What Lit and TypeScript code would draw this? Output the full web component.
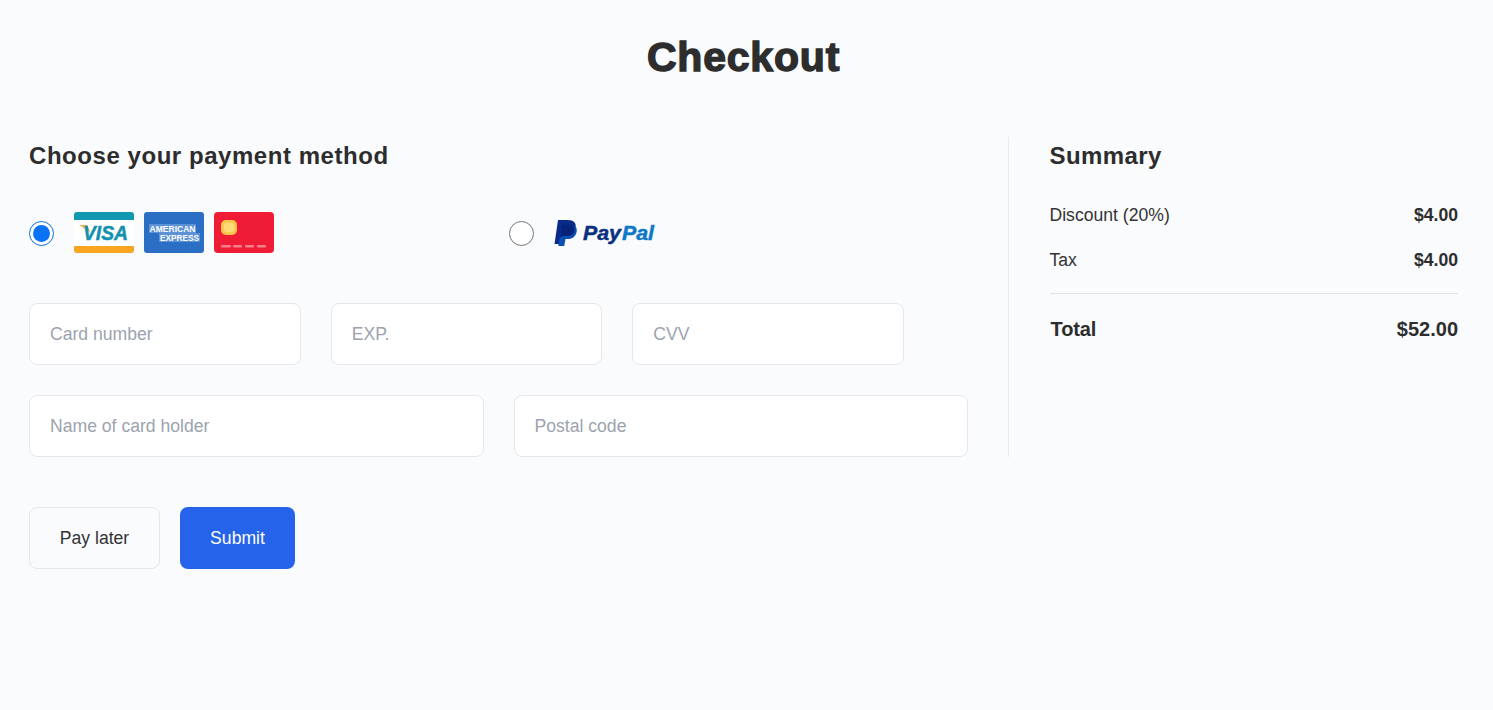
import { LitElement, html, css } from "lit";
import { customElement } from "lit/decorators.js";

@customElement("app-root")
export class AppRoot extends LitElement {
  static styles = css`
    :host { display: block; min-height: 710px; background: #fafbfd; font-family: "Liberation Sans", Arial, sans-serif; color: #2d2d2d; }
    .page { width: 1487px; box-sizing: border-box; padding: 34px 29px 0 29px; }
    h1 { margin: 0; text-align: center; font-size: 41px; line-height: 46px; font-weight: 700; letter-spacing: 0.8px; -webkit-text-stroke: 1.4px #2d2d2d; }
    .grid { display: grid; grid-template-columns: 980px 449px; margin-top: 57px; }
    .left { padding-right: 40px; border-right: 1px solid #e9ebee; height: 320px; box-sizing: border-box; }
    .right { padding-left: 40.5px; }
    h2 { margin: 1px 0 0; font-size: 24px; line-height: 36px; font-weight: 700; }
    .left h2 { letter-spacing: .55px; }
    .right h2 { letter-spacing: .4px; }
    .methods { display: grid; grid-template-columns: 480px 1fr; margin-top: 38px; height: 42px; }
    .method { display: flex; align-items: center; }
    .radio { width: 25px; height: 25px; box-sizing: border-box; border-radius: 50%; border: 1px solid #767676; background: #fff; flex: none; margin-right: 20px; display: flex; align-items: center; justify-content: center; }
    .radio.on { border: 1.5px solid #0b6fe0; }
    .radio.on i { width: 17px; height: 17px; border-radius: 50%; background: #0a73f5; }
    .cards { display: flex; gap: 10px; }
    svg { display: block; }
    .row { display: grid; gap: 30px; margin-top: 30px; }
    .row.three { grid-template-columns: repeat(3, 1fr); margin-top: 49px; width: 875px; }
    .row.two { grid-template-columns: repeat(2, 1fr); }
    .field { height: 62px; box-sizing: border-box; padding: 0 20px; display: flex; align-items: center; background: #fff; border: 1px solid #e5e7eb; border-radius: 8px; font-size: 17.6px; color: #9ca3af; }
    .actions { display: flex; gap: 20px; margin-top: 50px; }
    .btn { height: 62px; box-sizing: border-box; display: flex; align-items: center; justify-content: center; border-radius: 8px; font-size: 17.6px; }
    .btn.later { width: 131px; border: 1px solid #e5e7eb; color: #333; background: #fafbfd; }
    .btn.submit { width: 115px; background: #2563eb; color: #fff; }
    .line { display: flex; justify-content: space-between; font-size: 17.6px; line-height: 27px; color: #333; }
    .line b { color: #2d2d2d; }
    .line.first { margin-top: 28px; }
    .line.second { margin-top: 18px; }
    hr { border: 0; border-top: 1px solid #e2e4e8; margin: 19px 0 0; }
    .total { display: flex; justify-content: space-between; margin-top: 20px; font-size: 20px; line-height: 30px; font-weight: 700; }
    .total span:first-child { padding-left: 1px; letter-spacing: -.1px; }
  `;

  render() {
    return html`<div class="page">
      <h1>Checkout</h1>
      <div class="grid">
        <div class="left">
          <h2>Choose your payment method</h2>
          <div class="methods">
            <div class="method">
              <span class="radio on"><i></i></span>
              <div class="cards">
                <svg width="60" height="42" viewBox="0 0 60 42">
                  <rect width="60" height="41" rx="3" fill="#fff"/>
                  <path d="M0 8V3a3 3 0 0 1 3-3h54a3 3 0 0 1 3 3v5z" fill="#0f98b0"/>
                  <path d="M0 34v4a3 3 0 0 0 3 3h54a3 3 0 0 0 3-3v-4z" fill="#f9a51f"/>
                  <path d="M5 13h8l3 7z" fill="#f2b04a"/>
                  <text x="9" y="28" font-family="Liberation Sans" font-size="21" font-weight="700" font-style="italic" fill="#1390ae" stroke="#1390ae" stroke-width=".5" textLength="45" lengthAdjust="spacingAndGlyphs">VISA</text>
                </svg>
                <svg width="60" height="42" viewBox="0 0 60 42">
                  <rect width="60" height="41" rx="3" fill="#2b6fc4"/>
                  <rect x="5" y="12" width="47" height="9" fill="#5d93d6"/>
                  <rect x="15" y="21" width="41" height="9" fill="#5d93d6"/>
                  <g font-family="Liberation Sans" font-size="8.500" font-weight="700" fill="#fff">
                    <text x="5.500" y="20" textLength="46" lengthAdjust="spacingAndGlyphs">AMERICAN</text>
                    <text x="16" y="29" textLength="39" lengthAdjust="spacingAndGlyphs">EXPRESS</text>
                  </g>
                </svg>
                <svg width="60" height="42" viewBox="0 0 60 42">
                  <rect width="60" height="41" rx="4" fill="#ee1c35"/>
                  <rect x="7" y="8" width="16" height="15" rx="5" fill="#fcc64f"/>
                  <rect x="10" y="11" width="10" height="9" rx="3" fill="#fddc7a"/>
                  <g fill="#f4808d"><rect x="7" y="33" width="10" height="2.500" rx="1"/><rect x="19" y="33" width="9" height="2.500" rx="1"/><rect x="31" y="33" width="9" height="2.500" rx="1"/><rect x="43" y="33" width="9" height="2.500" rx="1"/></g>
                </svg>
              </div>
            </div>
            <div class="method">
              <span class="radio"></span>
              <svg width="102" height="28" viewBox="0 0 102 28">
                <path d="M4 1h10c5.500 0 8.500 3 7.600 7.800C20.600 14.500 16.500 17 11.500 17H8.500L7 25H.5z" fill="#0a2a8a"/>
                <path d="M7.500 6h9c4.500 0 6.800 2.200 6.200 6.500-.8 5-4.300 7.500-9 7.500h-2.200l-1.300 7H4.300z" fill="#0b4fb0"/>
                <path d="M7.500 6h8.200c3.500 0 5.300 1.800 4.800 5.500-.6 3.800-3.500 5.500-7 5.500H8.500l-2.700 1.500z" fill="#06237c"/>
                <g font-family="Liberation Sans" font-size="21" font-weight="700" font-style="italic">
                  <text x="29" y="21" fill="#0b2f7e" stroke="#0b2f7e" stroke-width=".5" textLength="38" lengthAdjust="spacingAndGlyphs">Pay</text>
                  <text x="68" y="21" fill="#0b78c9" stroke="#0b78c9" stroke-width=".5" textLength="32" lengthAdjust="spacingAndGlyphs">Pal</text>
                </g>
              </svg>
            </div>
          </div>
          <div class="row three">
            <div class="field">Card number</div>
            <div class="field">EXP.</div>
            <div class="field">CVV</div>
          </div>
          <div class="row two">
            <div class="field">Name of card holder</div>
            <div class="field">Postal code</div>
          </div>
        </div>
        <div class="right">
          <h2>Summary</h2>
          <div class="line first"><span>Discount (20%)</span><b>$4.00</b></div>
          <div class="line second"><span>Tax</span><b>$4.00</b></div>
          <hr />
          <div class="total"><span>Total</span><span>$52.00</span></div>
        </div>
      </div>
      <div class="actions">
        <div class="btn later">Pay later</div>
        <div class="btn submit">Submit</div>
      </div>
    </div>`;
  }
}
